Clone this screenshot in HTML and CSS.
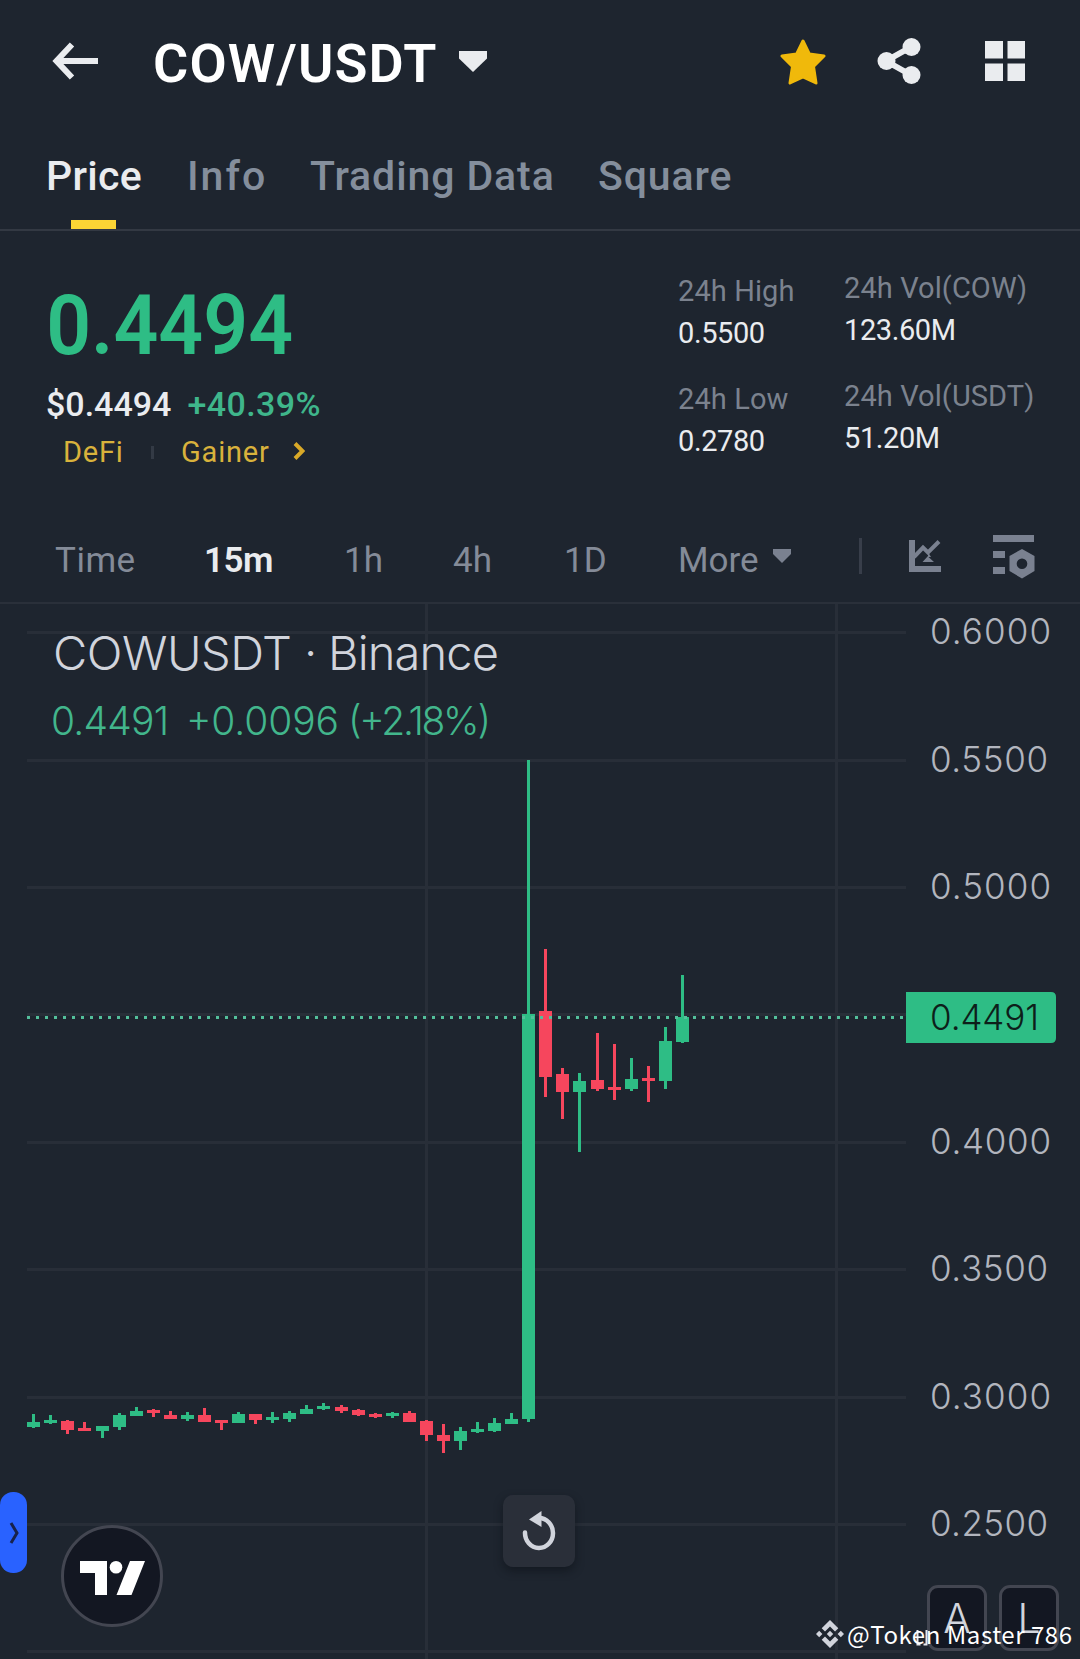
FILE: index.html
```html
<!doctype html>
<html lang="en">
<head>
    <meta charset="utf-8">
    <meta content="width=device-width,initial-scale=1" name="viewport">
    <title>COW/USDT</title>
    <link rel="stylesheet" href="styles.css">
</head>
<body>
<header class="topbar">
    <svg class="back" width="46" height="38" viewBox="0 0 46 38">
        <path d="M20 2.500L4.500 19L20 35.500M5 19H46" fill="none" stroke="#eaecef" stroke-width="6"/>
    </svg>
    <h1>COW/USDT</h1>
    <svg class="caret" width="28" height="21" viewBox="0 0 28 21">
        <path d="M0 0H28V7.500L14 21L0 7.500z" fill="#eaecef"/>
    </svg>
    <div class="actions">
        <svg width="46" height="48" viewBox="0 0 46 48">
            <path d="M23 4L29.300 17L44 19L33.500 29.500L36 46L23 40L10 46L12.500 29.500L2 19L16.700 17z" fill="#f0b90b" stroke="#f0b90b" stroke-width="3" stroke-linejoin="round"/>
        </svg>
        <svg width="44" height="48" viewBox="0 0 44 48">
            <path d="M34 10L9 24L34 38" fill="none" stroke="#eaecef" stroke-width="6"/>
            <circle cx="34.500" cy="10" r="9" fill="#eaecef"/>
            <circle cx="9.500" cy="24" r="9" fill="#eaecef"/>
            <circle cx="34.500" cy="38" r="9" fill="#eaecef"/>
        </svg>
        <svg width="40" height="40" viewBox="0 0 40 40">
            <path d="M0 0h18v17.500H0zM22.500 0H40v17.500H22.500zM0 22.500h18V40H0zM22.500 22.500H40V40H22.500z" fill="#eaecef"/>
        </svg>
    </div>
</header>

<nav class="tabs">
    <a class="tab active">Price</a>
    <a class="tab info">Info</a>
    <a class="tab trading">Trading Data</a>
    <a class="tab square">Square</a>
</nav>

<section class="ticker">
    <div class="last">
        <div class="price">0.4494</div>
        <div class="fiat"><span>$0.4494</span><span class="up">+40.39%</span></div>
        <div class="tags">
            <span class="defi">DeFi</span>
            <i></i>
            <span class="gainer">Gainer</span>
            <svg width="12" height="18" viewBox="0 0 12 18">
                <path d="M2 1.500L9.500 9L2 16.500" fill="none" stroke="#d9a928" stroke-width="4"/>
            </svg>
        </div>
    </div>
    <dl class="stats">
        <dt>24h High</dt>
        <dd>0.5500</dd>
        <dt>24h Low</dt>
        <dd>0.2780</dd>
    </dl>
    <dl class="stats volume">
        <dt class="cow">24h Vol(COW)</dt>
        <dd>123.60M</dd>
        <dt>24h Vol(USDT)</dt>
        <dd>51.20M</dd>
    </dl>
</section>

<nav class="intervals">
    <span class="time">Time</span>
    <span class="m15 on">15m</span>
    <span class="h1">1h</span>
    <span class="h4">4h</span>
    <span class="d1">1D</span>
    <span class="more">More</span>
    <svg class="more-caret" width="18" height="14" viewBox="0 0 18 14">
        <path d="M0 0H18V5L9 14L0 5z" fill="#7a8190"/>
    </svg>
    <i></i>
    <svg class="indicator" width="34" height="34" viewBox="0 0 34 34">
        <path d="M1 1H7V27H33V33H1z" fill="#7a8190"/>
        <path d="M6 18L15 8.500L20 13.500L31 2.500" fill="none" stroke="#7a8190" stroke-width="4"/>
        <path d="M20 13L23 18L20.500 18L26 23H14.500L20 17z" fill="#7a8190"/>
    </svg>
    <svg class="settings" width="42" height="44" viewBox="0 0 42 44">
        <path d="M0 0H41V7H0zM0 16H12V23H0zM0 32H12V39H0z" fill="#7a8190"/>
        <path fill-rule="evenodd" d="M29 14L41.500 21V36L29 43.500L16.500 36V21zM29 23.500A5.300 5.300 0 1 0 29 34.100A5.300 5.300 0 1 0 29 23.500z" fill="#7a8190"/>
    </svg>
</nav>

<section class="chart">
    <svg id="plot" width="1080" height="1055" viewBox="0 604 1080 1055">
        <g id="grid"></g>
        <g id="candles"></g>
        <path class="last-line" d="M27 1017.500H906"/>
        <path d="M906 992h145q5 0 5 5v41q0 5 -5 5h-145z" fill="#2ebd85"/>
        <g id="axis"></g>
        <text class="axis tag-text" x="930" y="1030" textLength="109">0.4491</text>
        <text class="symbol" x="53" y="670" textLength="239">COWUSDT</text>
        <text class="symbol" x="304" y="670">·</text>
        <text class="symbol" x="328" y="670" textLength="171">Binance</text>
        <g class="change">
            <text x="51" y="735" textLength="118">0.4491</text>
            <text x="186" y="735" textLength="153">+0.0096</text>
            <text x="348" y="735" textLength="143">(+2.18%)</text>
        </g>
    </svg>
    <button class="drawer">
        <svg width="12" height="24" viewBox="0 0 12 24">
            <path d="M2 2L8 12L2 22" fill="none" stroke="#17224c" stroke-width="3"/>
        </svg>
    </button>
    <div class="tv">
        <svg width="65" height="34" viewBox="0 0 65 34">
            <path d="M0 0H27V34H15V12H0zM50 0H65L51.500 34H36.500z" fill="#fff"/>
            <circle cx="36" cy="6.300" r="6.300" fill="#fff"/>
        </svg>
    </div>
    <button class="reset">
        <svg width="36" height="42" viewBox="0 0 36 42">
            <path d="M4 22.500A14 15 0 1 0 18 8" fill="none" stroke="#d1d4dc" stroke-width="4.500" stroke-linecap="round"/>
            <path d="M8 9.500L20.500 1V17z" fill="#d1d4dc"/>
        </svg>
    </button>
    <div class="scale">
        <button>A</button>
        <button>L</button>
    </div>
    <svg class="corner" width="12" height="16" viewBox="0 0 12 16">
        <path d="M1.500 0V14.500H4.500M10.500 0V14.500H7.500" fill="none" stroke="#e6e8ee" stroke-width="2"/>
    </svg>
    <div class="author">
        <svg width="28" height="28" viewBox="0 0 28 28">
            <path d="M14 0L22.300 8.300L19 11.500L14 6.500L9 11.500L5.700 8.300zM14 28L5.700 19.700L9 16.500L14 21.500L19 16.500L22.300 19.700zM14 10.800L17.200 14L14 17.200L10.800 14zM3.200 10.800L6.400 14L3.200 17.200L0 14zM24.800 10.800L28 14L24.800 17.200L21.600 14z" fill="#d1d4dc"/>
        </svg>
        <span>@Token Master 786</span>
    </div>
</section>

<script>
    // candle: x, high, low, body top, body bottom, up
    const candles = [
        [33.5, 1414, 1428, 1422, 1427, 1],
        [50.5, 1415, 1424, 1420, 1423, 1],
        [67.5, 1420, 1434, 1421, 1430, 0],
        [84.5, 1422, 1431, 1428, 1431, 0],
        [102.5, 1426, 1438, 1426, 1431, 1],
        [119.5, 1413, 1430, 1415, 1427, 1],
        [136.5, 1407, 1416, 1411, 1416, 1],
        [153.5, 1409, 1417, 1410, 1413, 0],
        [170.5, 1411, 1419, 1415, 1419, 0],
        [187.5, 1412, 1421, 1415, 1419, 1],
        [204.5, 1408, 1422, 1415, 1422, 0],
        [221.5, 1420, 1430, 1420, 1423, 0],
        [238.5, 1412, 1423, 1414, 1423, 1],
        [255.5, 1414, 1424, 1414, 1420, 0],
        [272.5, 1412, 1423, 1417, 1420, 1],
        [289.5, 1411, 1422, 1413, 1419, 1],
        [306.5, 1405, 1414, 1409, 1414, 1],
        [323.5, 1403, 1410, 1406, 1409, 1],
        [341.5, 1405, 1413, 1407, 1411, 0],
        [358.5, 1409, 1416, 1410, 1415, 0],
        [375.5, 1413, 1418, 1414, 1417, 0],
        [392.5, 1412, 1418, 1413, 1416, 1],
        [409.5, 1411, 1422, 1413, 1422, 0],
        [426.5, 1420, 1441, 1421, 1435, 0],
        [443.5, 1424, 1453, 1435, 1441, 0],
        [460.5, 1427, 1450, 1431, 1441, 1],
        [477.5, 1422, 1433, 1429, 1432, 1],
        [494.5, 1418, 1432, 1423, 1431, 1],
        [511.5, 1413, 1424, 1419, 1424, 1],
        [528.5, 760, 1422, 1014, 1419, 1],
        [545.5, 949, 1097, 1011, 1077, 0],
        [562.5, 1068, 1119, 1074, 1092, 0],
        [579.5, 1073, 1152, 1081, 1092, 1],
        [597.5, 1033, 1091, 1080, 1089, 0],
        [614.5, 1044, 1100, 1087, 1090, 0],
        [631.5, 1058, 1091, 1079, 1089, 1],
        [648.5, 1066, 1102, 1078, 1081, 0],
        [665.5, 1027, 1089, 1041, 1081, 1],
        [682.5, 975, 1043, 1017, 1042, 1]
    ]
    const prices = ['0.6000', '0.5500', '0.5000', '', '0.4000', '0.3500', '0.3000', '0.2500', '']

    let grid = '<path d="M426.5 604V1659M836.5 604V1659"/>'
    let axis = ''
    prices.forEach((p, i) => {
        const y = Math.floor(632.7 + i * 127.4) + 0.5
        grid += `<path d="M27 ${y}H906"/>`
        if (p) {
            axis += `<text class="axis" x="930" y="${y + 11.5}" textLength="${p.endsWith('500') ? 118 : 121}">${p}</text>`
        }
    })
    document.getElementById('grid').innerHTML = grid
    document.getElementById('axis').innerHTML = axis

    document.getElementById('candles').innerHTML = candles.map(([x, high, low, top, bottom, up]) =>
        `<path class="${up ? 'green' : 'red'}" d="M${x - 1.5} ${high}h3V${low}h-3zM${x - 6.5} ${top}h13V${bottom}h-13z"/>`
    ).join('')
</script>
</body>
</html>
```
FILE: styles.css
```css
* {
    box-sizing: border-box;
}

body {
    margin: 0;
    width: 1080px;
    height: 1659px;
    overflow: hidden;
    background: #1e252f;
    color: #eaecef;
    font-family: Roboto, "Noto Sans", sans-serif;
}

svg {
    display: block;
    flex: none;
}

button {
    padding: 0;
    border: 0;
}

.topbar {
    height: 122px;
    display: flex;
    align-items: center;
    padding: 0 55px 0 52px;
}

h1 {
    margin: 6px 0 0 55px;
    width: 306px;
    font-size: 54px;
    line-height: 64px;
    font-weight: 600;
    letter-spacing: 1.1px;
    color: #fff;
    white-space: nowrap;
}

.actions {
    margin-left: auto;
    display: flex;
    align-items: center;
    gap: 64px;
}

.actions svg:first-child {
    margin-right: -13px;
}

.tabs {
    height: 109px;
    display: flex;
    padding-left: 46px;
    border-bottom: 2px solid #333943;
    font-size: 41px;
    font-weight: 500;
    line-height: 48px;
    letter-spacing: 0.9px;
    color: #848e9c;
    white-space: nowrap;
}

.tab {
    padding-top: 30px;
}

.active {
    width: 141px;
    color: #eaecef;
    letter-spacing: 0.3px;
    display: flex;
    flex-direction: column;
    justify-content: space-between;
}

.active::after {
    content: "";
    width: 45px;
    height: 9px;
    margin-left: 25px;
    background: #fcd535;
}

.info {
    width: 123px;
    letter-spacing: 2px;
}

.trading {
    width: 288px;
}

.ticker {
    height: 279px;
    display: flex;
    padding-left: 46px;
    white-space: nowrap;
}

.last {
    width: 632px;
    padding-top: 46px;
}

.price {
    font-size: 83px;
    line-height: 98px;
    font-weight: 600;
    color: #2ebd85;
    transform: scaleX(0.947);
    transform-origin: 4px 0;
}

.fiat {
    margin-top: 9px;
    display: flex;
    gap: 16px;
    font-size: 34px;
    line-height: 40px;
    font-weight: 500;
}

.up {
    color: #3fb68b;
    letter-spacing: 0.4px;
}

.tags {
    margin-top: 8px;
    padding-left: 17px;
    display: flex;
    align-items: center;
    font-size: 29px;
    line-height: 40px;
    letter-spacing: 0.8px;
    color: #d9b23c;
}

.tags svg {
    margin-top: -2px;
}

.defi {
    width: 88px;
}

.tags i {
    width: 3px;
    height: 13px;
    background: #333a45;
}

.gainer {
    width: 112px;
    margin-left: 27px;
}

.stats {
    margin: 0;
    width: 166px;
    padding-top: 39px;
    font-size: 29px;
}

.volume {
    padding-top: 36px;
}

.stats dt {
    line-height: 34px;
    height: 42px;
    padding-top: 4px;
    letter-spacing: 0.1px;
    color: #7b828e;
}

.stats dd {
    margin: 0;
    height: 66px;
    padding-top: 4px;
    line-height: 34px;
    letter-spacing: -0.4px;
}

.intervals {
    height: 94px;
    display: flex;
    align-items: center;
    padding: 0 0 0 55px;
    border-bottom: 2px solid #2a303a;
    font-size: 35px;
    color: #848b98;
    white-space: nowrap;
}

.intervals span {
    margin-top: 8px;
}

.time {
    width: 149px;
    letter-spacing: 0.5px;
}

.m15 {
    width: 140px;
    letter-spacing: -0.5px;
}

.on {
    font-weight: 600;
    color: #eaecef;
}

.h1 {
    width: 109px;
}

.h4 {
    width: 111px;
}

.d1 {
    width: 114px;
}

.more {
    width: 95px;
}

.intervals i {
    width: 3px;
    height: 36px;
    margin-left: 68px;
    background: #383e4a;
}

.indicator {
    margin-left: 46px;
}

.settings {
    margin: 2px 0 0 51px;
}

.chart {
    position: relative;
    height: 1055px;
    font-family: Inter, sans-serif;
    font-weight: 300;
}

#grid path {
    stroke: #282e38;
    stroke-width: 3;
}

.green {
    fill: #2ebd85;
}

.red {
    fill: #f6465d;
}

.last-line {
    stroke: #53bf9b;
    stroke-width: 3;
    stroke-dasharray: 3 6;
}

.axis {
    font-size: 35px;
    fill: #b2b5be;
}

.tag-text {
    fill: #0d1f1a;
}

.symbol {
    font-size: 47px;
    fill: #d1d4dc;
}

.change {
    font-size: 39px;
    fill: #42b68c;
}

.drawer {
    position: absolute;
    left: 0;
    top: 888px;
    width: 27px;
    height: 81px;
    padding-left: 9px;
    border-radius: 13px;
    background: #2962ff;
}

.tv {
    position: absolute;
    left: 61px;
    top: 921px;
    width: 102px;
    height: 102px;
    border: 3px solid #434651;
    border-radius: 50%;
    background: #131722;
    display: flex;
    align-items: center;
    justify-content: center;
}

.tv svg {
    margin-top: 3px;
}

.reset {
    position: absolute;
    left: 503px;
    top: 891px;
    width: 72px;
    height: 72px;
    border-radius: 10px;
    background: #2a2f39;
    box-shadow: 0 4px 8px rgba(10, 14, 20, 0.5);
    display: flex;
    align-items: center;
    justify-content: center;
}

.scale {
    position: absolute;
    left: 927px;
    top: 981px;
    display: flex;
    gap: 12px;
}

.scale button {
    width: 60px;
    height: 66px;
    border: 3px solid #434651;
    border-radius: 11px;
    background: #131722;
    color: #d1d4dc;
    font: 300 41px/60px Inter, sans-serif;
}

.corner {
    position: absolute;
    left: 916px;
    top: 1026px;
}

.author {
    position: absolute;
    left: 816px;
    top: 1012px;
    display: flex;
    align-items: center;
    gap: 3px;
    color: #fff;
    font: 400 24px/36px "Noto Sans CJK SC", sans-serif;
    letter-spacing: 0.55px;
    white-space: nowrap;
}
```
